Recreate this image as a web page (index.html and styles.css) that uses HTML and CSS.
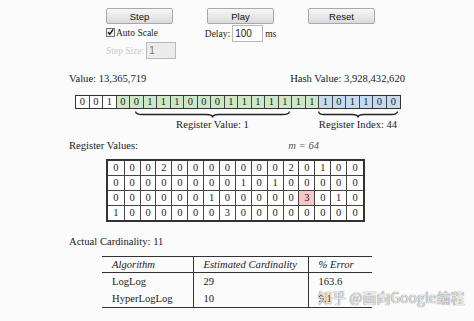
FILE: index.html
```html
<!DOCTYPE html>
<html lang="en">
<head>
    <meta charset="UTF-8">
    <meta name="viewport" content="width=device-width, initial-scale=1.0">
    <title>HyperLogLog Demo</title>
    <link rel="stylesheet" href="styles.css">
</head>
<body>
<div class="page">
    <div class="controls">
        <div class="ctrl-col">
            <button>Step</button>
            <label class="check"><span class="box"><svg viewBox="0 0 8 8" width="8" height="8"><path d="M1.2 4.2 L3.2 6.4 L7 1" fill="none" stroke="#111" stroke-width="1.6"/></svg></span>Auto Scale</label>
            <div class="field disabled">Step Size: <input type="text" value="1" disabled></div>
        </div>
        <div class="ctrl-col center">
            <button>Play</button>
            <div class="field">Delay: <input type="text" value="100"> ms</div>
        </div>
        <div class="ctrl-col">
            <button>Reset</button>
        </div>
    </div>

    <div class="row">
        <span>Value: 13,365,719</span>
        <span>Hash Value: 3,928,432,620</span>
    </div>

    <div class="bits">
        <span>0</span><span>0</span><span>1</span>
        <span class="g">0</span><span class="g">0</span><span class="g">1</span><span class="g">1</span><span class="g">1</span>
        <span class="g">0</span><span class="g">0</span><span class="g">0</span><span class="g">1</span><span class="g">1</span>
        <span class="g">1</span><span class="g">1</span><span class="g">1</span><span class="g">1</span><span class="g">1</span>
        <span class="b">1</span><span class="b">0</span><span class="b">1</span><span class="b">1</span><span class="b">0</span><span class="b">0</span>
    </div>

    <div class="braces">
        <div class="brace brace-value">
            <svg viewBox="0 0 155 7" width="155" height="7" preserveAspectRatio="none"><path d="M0.5 0.5 Q1 3.5 7 3.5 L71.5 3.5 Q77.5 3.5 77.5 6.5 Q77.5 3.5 83.5 3.5 L148 3.5 Q154 3.5 154.5 0.5" fill="none" stroke="#222" stroke-width="1.4"/></svg>
            <div>Register Value: 1</div>
        </div>
        <div class="brace brace-index">
            <svg viewBox="0 0 80 7" width="80" height="7" preserveAspectRatio="none"><path d="M0.5 0.5 Q1 3.5 6 3.5 L34 3.5 Q40 3.5 40 6.5 Q40 3.5 46 3.5 L74 3.5 Q79 3.5 79.5 0.5" fill="none" stroke="#222" stroke-width="1.4"/></svg>
            <div>Register Index: 44</div>
        </div>
    </div>

    <div class="row reg-head">
        <span>Register Values:</span>
        <span class="m">m = 64</span>
    </div>

    <table class="registers">
        <tr><td>0</td><td>0</td><td>0</td><td>2</td><td>0</td><td>0</td><td>0</td><td>0</td><td>0</td><td>0</td><td>0</td><td>2</td><td>0</td><td>1</td><td>0</td><td>0</td></tr>
        <tr><td>0</td><td>0</td><td>0</td><td>0</td><td>0</td><td>0</td><td>0</td><td>0</td><td>1</td><td>0</td><td>1</td><td>0</td><td>0</td><td>0</td><td>0</td><td>0</td></tr>
        <tr><td>0</td><td>0</td><td>0</td><td>0</td><td>0</td><td>0</td><td>1</td><td>0</td><td>0</td><td>0</td><td>0</td><td>0</td><td class="hit">3</td><td>0</td><td>1</td><td>0</td></tr>
        <tr><td>1</td><td>0</td><td>0</td><td>0</td><td>0</td><td>0</td><td>0</td><td>3</td><td>0</td><td>0</td><td>0</td><td>0</td><td>0</td><td>0</td><td>0</td><td>0</td></tr>
    </table>

    <div class="actual">Actual Cardinality: 11</div>

    <div class="result-wrap">
        <table class="results">
            <colgroup><col class="c1"><col class="c2"><col class="c3"></colgroup>
            <thead>
                <tr><th>Algorithm</th><th>Estimated Cardinality</th><th>% Error</th></tr>
            </thead>
            <tbody>
                <tr><td>LogLog</td><td>29</td><td>163.6</td></tr>
                <tr><td>HyperLogLog</td><td>10</td><td>9.1</td></tr>
            </tbody>
        </table>
        <div class="watermark">知乎 @面向Google编程</div>
    </div>
</div>
</body>
</html>
```

FILE: styles.css
```css
body {
    margin: 0;
    background-color: #fbfbfb;
    font-family: "Liberation Serif", "Times New Roman", serif;
    font-size: 10.6px;
    color: #222;
}
.page {
    width: 336px;
    margin: 0 auto;
    padding-top: 8px;
}
.controls {
    display: flex;
    gap: 34px;
    padding-left: 37px;
    height: 51px;
}
.ctrl-col {
    width: 67px;
    display: flex;
    flex-direction: column;
    align-items: flex-start;
}
.ctrl-col.center {
    align-items: center;
}
button {
    width: 67px;
    height: 16px;
    padding: 0;
    font-family: "Liberation Sans", Arial, sans-serif;
    font-size: 9.5px;
    color: #111;
    background: linear-gradient(#f7f7f7, #dadada);
    border: 1px solid #a8a8a8;
    border-radius: 2px;
}
.check {
    display: flex;
    align-items: center;
    gap: 1px;
    margin-top: 3px;
    height: 11px;
    font-size: 9.5px;
    white-space: nowrap;
}
.box {
    display: flex;
    width: 7px;
    height: 7px;
    border: 1px solid #777;
    background-color: #eee;
    overflow: visible;
}
.box svg {
    margin-top: -1px;
}
.field {
    display: flex;
    align-items: center;
    gap: 2px;
    font-size: 9.5px;
    white-space: nowrap;
    margin-top: 1px;
}
.field.disabled {
    margin-top: 4px;
    color: #c8c8c8;
}
.field input {
    width: 31px;
    height: 17px;
    box-sizing: border-box;
    border: 1px solid #b9b9b9;
    padding: 0 2px;
    font-family: "Liberation Sans", Arial, sans-serif;
    font-size: 10px;
    color: #222;
    background-color: #fff;
}
.field.disabled input {
    width: 30px;
    background-color: #ebebeb;
    color: #777;
}
.row {
    display: flex;
    justify-content: space-between;
    line-height: 14px;
    margin-top: 13px;
}
.bits {
    display: grid;
    grid-template-columns: repeat(24, 1fr);
    width: 326px;
    height: 14px;
    box-sizing: border-box;
    margin: 9px 0 0 6px;
    border: 1px solid #333;
    background-color: #fff;
}
.bits span {
    border-right: 1px solid #444;
    text-align: center;
    font-size: 10.5px;
    line-height: 12px;
}
.bits span:last-child {
    border-right: none;
}
.bits .g {
    background-color: #cde8c6;
}
.bits .b {
    background-color: #c5dbef;
}
.braces {
    display: flex;
    margin-top: 2px;
}
.brace {
    display: flex;
    flex-direction: column;
    align-items: center;
    line-height: 14px;
}
.brace svg {
    display: block;
}
.brace-value {
    margin-left: 66px;
}
.brace-index {
    margin-left: 28px;
}
.reg-head {
    margin-top: 7px;
    padding-right: 86px;
}
.m {
    font-style: italic;
    color: #555;
}
.registers {
    border-collapse: collapse;
    margin: 6px 0 0 37px;
    width: 259px;
    border: 2px solid #333;
    background-color: #fff;
}
.registers td {
    border: 1px solid #444;
    height: 14px;
    padding: 0;
    text-align: center;
    font-size: 10.5px;
    line-height: 12px;
}
.registers .hit {
    background-color: #f6c6c8;
}
.actual {
    margin-top: 13px;
    line-height: 14px;
}
.result-wrap {
    position: relative;
    margin: 7px 0 0 33px;
}
.results {
    border-collapse: collapse;
    width: 270px;
    font-size: 10.6px;
}
.results .c1 { width: 91px; }
.results .c2 { width: 115px; }
.results .c3 { width: 64px; }
.results thead tr {
    border-top: 1.5px solid #333;
    border-bottom: 1px solid #333;
}
.results tbody tr:last-child {
    border-bottom: 1.5px solid #333;
}
.results th {
    font-style: italic;
    font-weight: normal;
    text-align: left;
    height: 15px;
    padding: 0 10px;
}
.results td {
    height: 17px;
    padding: 0 10px;
}
.results th + th,
.results td + td {
    border-left: 1px solid #333;
}
.watermark {
    position: absolute;
    left: 216px;
    top: 31px;
    font-family: "Noto Sans CJK SC", sans-serif;
    font-size: 14px;
    white-space: nowrap;
    color: rgba(255, 255, 255, 0.85);
    text-shadow: 0 0 1px rgba(0, 0, 0, 0.45), 0 0 1px rgba(0, 0, 0, 0.45);
}
```
